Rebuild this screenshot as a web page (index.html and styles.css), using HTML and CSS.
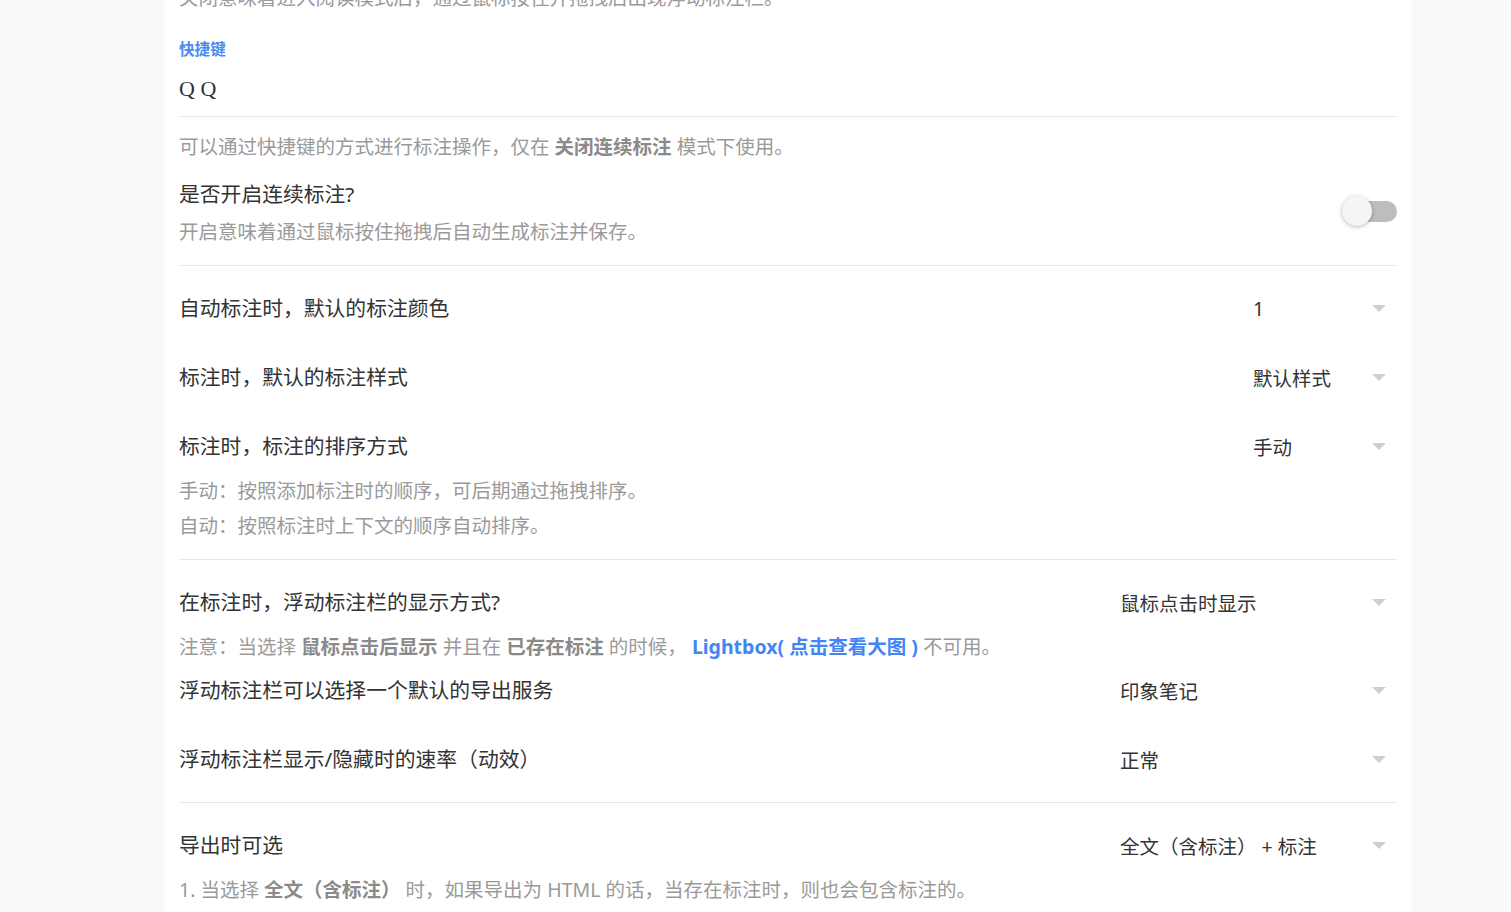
FILE: index.html
```html
<!DOCTYPE html>
<html lang="zh-CN">
<head>
<meta charset="utf-8">
<title>标注设置</title>
<link rel="stylesheet" href="styles.css">
</head>
<body>
<div class="page">
  <main class="card">
    <p class="desc cut">关闭意味着进入阅读模式后，通过鼠标按住并拖拽后出现浮动标注栏。</p>

    <div class="label">快捷键</div>
    <div class="input">Q Q</div>

    <p class="desc after-input">可以通过快捷键的方式进行标注操作，仅在 <b>关闭连续标注</b> 模式下使用。</p>

    <div class="switch-row">
      <div class="switch-text">
        <div class="title">是否开启连续标注?</div>
        <p class="desc tight">开启意味着通过鼠标按住拖拽后自动生成标注并保存。</p>
      </div>
      <div class="switch">
        <span class="track"></span>
        <span class="thumb"></span>
      </div>
    </div>

    <hr class="divider">

    <section class="section">
      <div class="row">
        <div class="title">自动标注时，默认的标注颜色</div>
        <div class="select narrow"><span class="value">1</span><span class="arrow"></span></div>
      </div>
      <div class="row">
        <div class="title">标注时，默认的标注样式</div>
        <div class="select narrow"><span class="value">默认样式</span><span class="arrow"></span></div>
      </div>
      <div class="row">
        <div class="title">标注时，标注的排序方式</div>
        <div class="select narrow"><span class="value">手动</span><span class="arrow"></span></div>
      </div>
      <p class="desc row-desc">手动：按照添加标注时的顺序，可后期通过拖拽排序。</p>
      <p class="desc">自动：按照标注时上下文的顺序自动排序。</p>
    </section>

    <hr class="divider">

    <section class="section">
      <div class="row">
        <div class="title">在标注时，浮动标注栏的显示方式?</div>
        <div class="select wide"><span class="value">鼠标点击时显示</span><span class="arrow"></span></div>
      </div>
      <p class="desc row-desc">注意：当选择 <b>鼠标点击后显示</b> 并且在 <b>已存在标注</b> 的时候， <a class="link">Lightbox( 点击查看大图 )</a> 不可用。</p>
      <div class="row follow">
        <div class="title">浮动标注栏可以选择一个默认的导出服务</div>
        <div class="select wide"><span class="value">印象笔记</span><span class="arrow"></span></div>
      </div>
      <div class="row">
        <div class="title">浮动标注栏显示/隐藏时的速率（动效）</div>
        <div class="select wide"><span class="value">正常</span><span class="arrow"></span></div>
      </div>
    </section>

    <hr class="divider divider-tall">

    <section class="section">
      <div class="row">
        <div class="title">导出时可选</div>
        <div class="select wide"><span class="value">全文（含标注） + 标注</span><span class="arrow"></span></div>
      </div>
      <p class="desc row-desc">1. 当选择 <b>全文（含标注）</b> 时，如果导出为 HTML 的话，当存在标注时，则也会包含标注的。</p>
    </section>
  </main>
</div>
</body>
</html>
```

FILE: styles.css
```css
html, body {
  margin: 0;
  padding: 0;
  background: #f9f9f9;
  height: 100%;
  overflow: hidden;
}

body {
  font-family: "Noto Sans", "Noto Sans CJK SC", sans-serif;
  color: #333;
}

.page {
  padding-left: 164px;
}

.card {
  width: 1218px;
  padding: 0 15px 40px;
  background: #fff;
  min-height: 960px;
  margin-top: -20px;
}

p {
  margin: 0;
}

.desc {
  font-size: 19.5px;
  line-height: 35px;
  color: #9a9a9a;
}

.desc b {
  color: #8a8a8a;
  font-weight: 700;
}

.link {
  color: #4285f4;
  font-weight: 700;
}

.label {
  margin-top: 24px;
  font-size: 15.6px;
  line-height: 20px;
  font-weight: 700;
  color: #4a8af4;
}

.input {
  font-family: "Liberation Serif", serif;
  font-size: 22px;
  line-height: 30px;
  padding: 15px 0 12px;
  border-bottom: 1px solid #e6e6e6;
  color: #333;
}

.after-input {
  margin-top: 12px;
}

.switch-row {
  display: flex;
  align-items: center;
  justify-content: space-between;
  margin-top: 13px;
}

.title {
  font-size: 20.8px;
  line-height: 35px;
  color: #333;
}

.tight {
  margin-top: 2px;
}

.switch {
  position: relative;
  width: 52px;
  height: 21px;
  margin-top: -4px;
}

.track {
  display: block;
  width: 52px;
  height: 21px;
  border-radius: 11px;
  background: #bdbdbd;
}

.thumb {
  position: absolute;
  left: -3px;
  top: -5px;
  width: 30px;
  height: 30px;
  border-radius: 50%;
  background: #f5f5f5;
  box-shadow: 0 1px 4px rgba(0, 0, 0, 0.28);
}

.divider {
  border: 0;
  border-top: 1px solid #e8e8e8;
  margin: 16px 0 0;
  height: 0;
}

.divider-tall {
  margin-top: 18px;
}

.section {
  padding-top: 17px;
}

.row {
  display: flex;
  align-items: center;
  justify-content: space-between;
  height: 50px;
}

.row + .row {
  margin-top: 19px;
}

.row.follow {
  margin-top: 1px;
}

.row-desc {
  margin-top: 2px;
}

.select {
  display: flex;
  align-items: center;
  justify-content: space-between;
  height: 40px;
}

.select.narrow {
  width: 144px;
}

.select.wide {
  width: 277px;
}

.value {
  font-size: 19.5px;
  color: #333;
}

.arrow {
  width: 0;
  height: 0;
  border-left: 7px solid transparent;
  border-right: 7px solid transparent;
  border-top: 7px solid #cfcfcf;
  margin-right: 11px;
}
```
